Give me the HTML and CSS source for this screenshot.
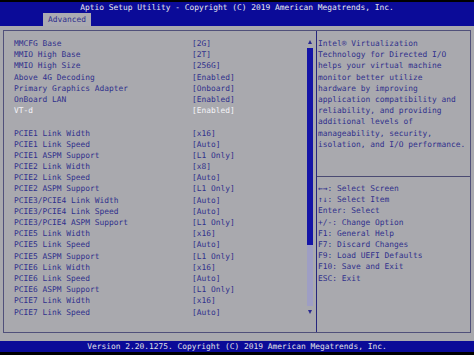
FILE: index.html
```html
<!DOCTYPE html>
<html lang="en">
<head>
  <meta charset="UTF-8" />
  <title>Aptio Setup Utility - Advanced</title>
  <link rel="stylesheet" href="styles.css">
</head>
<body>
  <div class="screen">
    <header class="top">
      <div class="title">Aptio Setup Utility - Copyright (C) 2019 American Megatrends, Inc.</div>
      <nav class="tabs"><span class="tab">Advanced</span></nav>
    </header>

    <main class="main">
      <div class="frame">
        <!-- Settings list -->
        <ul class="items">
          <li><span class="label">MMCFG Base</span><span class="value">[2G]</span></li>
          <li><span class="label">MMIO High Base</span><span class="value">[2T]</span></li>
          <li><span class="label">MMIO High Size</span><span class="value">[256G]</span></li>
          <li><span class="label">Above 4G Decoding</span><span class="value">[Enabled]</span></li>
          <li><span class="label">Primary Graphics Adapter</span><span class="value">[Onboard]</span></li>
          <li><span class="label">OnBoard LAN</span><span class="value">[Enabled]</span></li>
          <li class="selected"><span class="label">VT-d</span><span class="value">[Enabled]</span></li>
          <li class="gap"></li>
          <li><span class="label">PCIE1 Link Width</span><span class="value">[x16]</span></li>
          <li><span class="label">PCIE1 Link Speed</span><span class="value">[Auto]</span></li>
          <li><span class="label">PCIE1 ASPM Support</span><span class="value">[L1 Only]</span></li>
          <li><span class="label">PCIE2 Link Width</span><span class="value">[x8]</span></li>
          <li><span class="label">PCIE2 Link Speed</span><span class="value">[Auto]</span></li>
          <li><span class="label">PCIE2 ASPM Support</span><span class="value">[L1 Only]</span></li>
          <li><span class="label">PCIE3/PCIE4 Link Width</span><span class="value">[Auto]</span></li>
          <li><span class="label">PCIE3/PCIE4 Link Speed</span><span class="value">[Auto]</span></li>
          <li><span class="label">PCIE3/PCIE4 ASPM Support</span><span class="value">[L1 Only]</span></li>
          <li><span class="label">PCIE5 Link Width</span><span class="value">[x16]</span></li>
          <li><span class="label">PCIE5 Link Speed</span><span class="value">[Auto]</span></li>
          <li><span class="label">PCIE5 ASPM Support</span><span class="value">[L1 Only]</span></li>
          <li><span class="label">PCIE6 Link Width</span><span class="value">[x16]</span></li>
          <li><span class="label">PCIE6 Link Speed</span><span class="value">[Auto]</span></li>
          <li><span class="label">PCIE6 ASPM Support</span><span class="value">[L1 Only]</span></li>
          <li><span class="label">PCIE7 Link Width</span><span class="value">[x16]</span></li>
          <li><span class="label">PCIE7 Link Speed</span><span class="value">[Auto]</span></li>
        </ul>

        <!-- Scrollbar -->
        <div class="scroll">
          <span class="arrow up"></span>
          <span class="thumb"></span>
          <span class="track"></span>
          <span class="arrow down"></span>
        </div>

        <!-- Help panel -->
        <aside class="help">
          <div class="help-text">
            Intel® Virtualization<br>
            Technology for Directed I/O<br>
            helps your virtual machine<br>
            monitor better utilize<br>
            hardware by improving<br>
            application compatibility and<br>
            reliability, and providing<br>
            additional levels of<br>
            manageability, security,<br>
            isolation, and I/O performance.
          </div>
          <div class="keys">
            ←→: Select Screen<br>
            ↑↓: Select Item<br>
            Enter: Select<br>
            +/-: Change Option<br>
            F1: General Help<br>
            F7: Discard Changes<br>
            F9: Load UEFI Defaults<br>
            F10: Save and Exit<br>
            ESC: Exit
          </div>
        </aside>
      </div>
    </main>

    <footer class="bottom">Version 2.20.1275. Copyright (C) 2019 American Megatrends, Inc.</footer>
  </div>
</body>
</html>
```

FILE: styles.css
```css
* {
  box-sizing: border-box;
}

body, html {
  margin: 0;
  padding: 0;
  background: #000;
  overflow: hidden;
}

.screen {
  width: 474px;
  height: 355px;
  display: flex;
  flex-direction: column;
  font-family: "DejaVu Sans Mono", "Liberation Mono", monospace;
  font-size: 7.9px;
  color: #30308c;
  background: #a9a9ae;
}

.top {
  height: 26px;
  border-top: 2px solid #000;
  background: #0b0b98;
}

.title {
  height: 11px;
  line-height: 11px;
  text-align: center;
  color: #e8e8ee;
  white-space: nowrap;
}

.tabs {
  display: flex;
  padding-left: 43px;
}

.tab {
  width: 48px;
  height: 13px;
  line-height: 13px;
  text-align: center;
  background: #ababb2;
  color: #30308c;
}

.main {
  flex: 1;
  padding: 4px 3px 8px 3px;
}

.frame {
  height: 100%;
  display: flex;
  border: 1px solid #50507a;
}

.items {
  list-style: none;
  margin: 0;
  width: 303px;
  padding: 7px 0 0 10px;
}

.items li {
  display: flex;
  height: 11.2px;
  line-height: 11.2px;
  white-space: nowrap;
}

.items .label {
  width: 178px;
}

.items .selected {
  color: #f4f4f8;
}

.scroll {
  width: 9px;
  display: flex;
  flex-direction: column;
  padding-top: 9px;
}

.arrow {
  width: 0;
  height: 0;
  margin-left: 1px;
  border-left: 2px solid transparent;
  border-right: 2px solid transparent;
}

.arrow.up {
  border-bottom: 4px solid #2a2a90;
  margin-bottom: 4px;
}

.arrow.down {
  border-top: 4px solid #2a2a90;
  margin-top: 4px;
}

.thumb {
  width: 6px;
  height: 197px;
  background: #1414a6;
}

.track {
  width: 6px;
  height: 61px;
  background: #9e9ec4;
}

.help {
  width: 154px;
  border-left: 1px solid #26267e;
  display: flex;
  flex-direction: column;
  white-space: nowrap;
  line-height: 11.2px;
}

.help-text {
  height: 146px;
  padding: 7px 0 0 1px;
  border-bottom: 1px solid #4a4a72;
}

.keys {
  padding: 6px 0 0 1px;
}

.bottom {
  height: 14px;
  line-height: 11px;
  border-bottom: 3px solid #000;
  background: #0b0b98;
  color: #e0e0e8;
  text-align: center;
  white-space: nowrap;
}
```
